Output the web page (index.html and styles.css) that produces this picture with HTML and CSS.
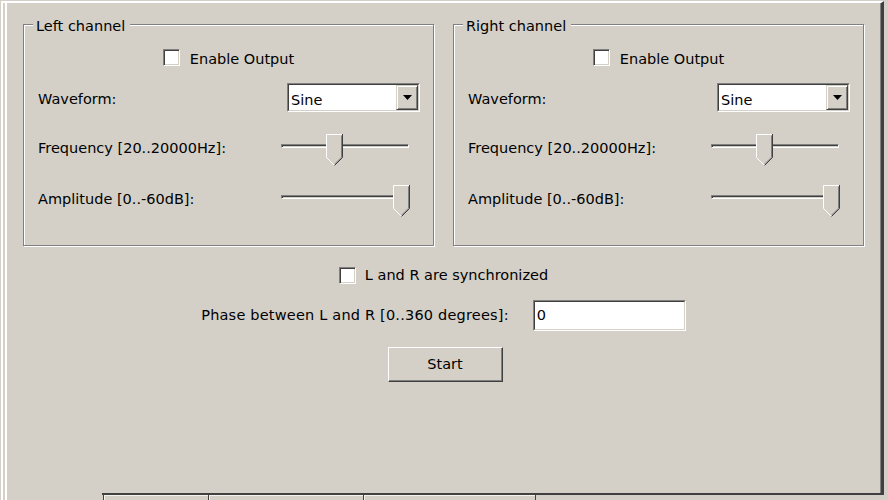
FILE: index.html
```html
<!DOCTYPE html>
<html>
<head>
<meta charset="utf-8">
<title>Signal generator</title>
<link rel="stylesheet" href="styles.css">
</head>
<body>
<div class="dialog">
  <div class="panel">
    <div class="content">
      <div class="groups">
        <div class="group">
          <div class="group-title">Left channel</div>
          <div class="row row-check">
            <span class="checkbox"></span><span class="label label-check">Enable Output</span>
          </div>
          <div class="row row-combo">
            <span class="label label-combo">Waveform:</span>
            <div class="combo"><div class="combo-inner"><span class="combo-text">Sine</span><span class="combo-btn"><svg width="9" height="5" viewBox="0 0 9 5"><polygon points="0,0 9,0 4.5,5" fill="#000"/></svg></span></div></div>
          </div>
          <div class="row row-slider">
            <span class="label label-slider">Frequency [20..20000Hz]:</span>
            <div class="slider"><div class="track"></div><svg class="thumb" style="left:45px" width="17" height="32" viewBox="0 0 17 32"><polygon points="0,0 17,0 17,23.5 8.5,32 0,23.5" fill="#d4d0c8"/><polyline points="0.5,23.5 0.5,0.5 16,0.5" fill="none" stroke="#fff"/><line x1="0.5" y1="23.5" x2="8.5" y2="31.5" stroke="#fff"/><polyline points="15.5,1.5 15.5,23.2 8.5,30.2" fill="none" stroke="#808080"/><polyline points="16.5,0 16.5,23.5 8.5,31.5" fill="none" stroke="#404040"/></svg></div>
          </div>
          <div class="row row-slider row-amp">
            <span class="label label-slider">Amplitude [0..-60dB]:</span>
            <div class="slider"><div class="track"></div><svg class="thumb" style="left:112px" width="17" height="32" viewBox="0 0 17 32"><polygon points="0,0 17,0 17,23.5 8.5,32 0,23.5" fill="#d4d0c8"/><polyline points="0.5,23.5 0.5,0.5 16,0.5" fill="none" stroke="#fff"/><line x1="0.5" y1="23.5" x2="8.5" y2="31.5" stroke="#fff"/><polyline points="15.5,1.5 15.5,23.2 8.5,30.2" fill="none" stroke="#808080"/><polyline points="16.5,0 16.5,23.5 8.5,31.5" fill="none" stroke="#404040"/></svg></div>
          </div>
        </div>
        <div class="group">
          <div class="group-title">Right channel</div>
          <div class="row row-check">
            <span class="checkbox"></span><span class="label label-check">Enable Output</span>
          </div>
          <div class="row row-combo">
            <span class="label label-combo">Waveform:</span>
            <div class="combo"><div class="combo-inner"><span class="combo-text">Sine</span><span class="combo-btn"><svg width="9" height="5" viewBox="0 0 9 5"><polygon points="0,0 9,0 4.5,5" fill="#000"/></svg></span></div></div>
          </div>
          <div class="row row-slider">
            <span class="label label-slider">Frequency [20..20000Hz]:</span>
            <div class="slider"><div class="track"></div><svg class="thumb" style="left:45px" width="17" height="32" viewBox="0 0 17 32"><polygon points="0,0 17,0 17,23.5 8.5,32 0,23.5" fill="#d4d0c8"/><polyline points="0.5,23.5 0.5,0.5 16,0.5" fill="none" stroke="#fff"/><line x1="0.5" y1="23.5" x2="8.5" y2="31.5" stroke="#fff"/><polyline points="15.5,1.5 15.5,23.2 8.5,30.2" fill="none" stroke="#808080"/><polyline points="16.5,0 16.5,23.5 8.5,31.5" fill="none" stroke="#404040"/></svg></div>
          </div>
          <div class="row row-slider row-amp">
            <span class="label label-slider">Amplitude [0..-60dB]:</span>
            <div class="slider"><div class="track"></div><svg class="thumb" style="left:112px" width="17" height="32" viewBox="0 0 17 32"><polygon points="0,0 17,0 17,23.5 8.5,32 0,23.5" fill="#d4d0c8"/><polyline points="0.5,23.5 0.5,0.5 16,0.5" fill="none" stroke="#fff"/><line x1="0.5" y1="23.5" x2="8.5" y2="31.5" stroke="#fff"/><polyline points="15.5,1.5 15.5,23.2 8.5,30.2" fill="none" stroke="#808080"/><polyline points="16.5,0 16.5,23.5 8.5,31.5" fill="none" stroke="#404040"/></svg></div>
          </div>
        </div>
      </div>
      <div class="sync">
        <span class="checkbox"></span><span class="label">L and R are synchronized</span>
      </div>
      <div class="phase">
        <span class="label label-phase">Phase between L and R [0..360 degrees]:</span>
        <div class="textbox"><div class="textbox-inner">0</div></div>
      </div>
      <div class="actions">
        <button class="btn" type="button">Start</button>
      </div>
    </div>
  </div>
  <div class="tabstrip">
    <div class="tab-active"><div class="tab-active-inner"></div></div>
    <div class="tabs-rest">
      <div class="tab tab-1"></div>
      <div class="tab tab-2"></div>
      <div class="tab tab-3"></div>
      <div class="tab tab-4"></div>
    </div>
  </div>
</div>
</body>
</html>
```

FILE: styles.css
```css
* { box-sizing: border-box; }
html, body { margin: 0; padding: 0; }
body {
  width: 888px;
  height: 500px;
  overflow: hidden;
  background: #d4d0c8;
  font-family: "DejaVu Sans", Verdana, sans-serif;
  font-size: 14.5px;
  line-height: 17px;
  color: #000;
}
.dialog {
  display: flex;
  flex-direction: column;
  height: 500px;
  padding: 1px 4px 0 1px;
}
.panel {
  flex: none;
  height: 492px;
  display: flex;
  border-top: 2px solid #fff;
  border-left: 2px solid #fff;
  border-right: 3px solid #404040;
  box-shadow: inset -1px 0 0 #808080;
}
.content {
  flex: 1;
  margin-left: 2px;
  margin-right: 1px;
  border-left: 2px solid #fff;
  padding-top: 21px;
  display: flex;
  flex-direction: column;
}
.groups {
  display: flex;
  gap: 19px;
  margin-left: 16px;
}
.group {
  width: 411px;
  height: 222px;
  border: 1px solid #808080;
  box-shadow: 1px 1px 0 #fff, inset 1px 1px 0 #fff;
  display: flex;
  flex-direction: column;
}
.group-title {
  align-self: flex-start;
  margin: -7px 0 0 9px;
  padding: 0 5px 0 3px;
  background: #d4d0c8;
}
.row {
  display: flex;
  padding: 0 13px 0 14px;
}
.label { white-space: nowrap; }
.row-check {
  justify-content: center;
  align-items: flex-start;
  gap: 10px;
  margin-top: 14px;
  padding: 0;
}
.label-check { margin-top: 2px; }
.row-combo {
  justify-content: space-between;
  align-items: flex-start;
  margin-top: 15px;
}
.label-combo { margin-top: 8px; }
.row-slider {
  justify-content: space-between;
  align-items: flex-start;
  margin-top: 22px;
}
.row-amp { margin-top: 19px; }
.label-slider { margin-top: 6px; }

.checkbox {
  flex: none;
  width: 17px;
  height: 17px;
  background: #fff;
  border: 1px solid;
  border-color: #808080 #fff #fff #808080;
  box-shadow: inset 1px 1px 0 #404040, inset -1px -1px 0 #d4d0c8;
}

.combo {
  width: 133px;
  height: 29px;
  border: 1px solid;
  border-color: #808080 #fff #fff #808080;
}
.combo-inner {
  height: 100%;
  display: flex;
  background: #fff;
  border: 1px solid;
  border-color: #404040 #d4d0c8 #d4d0c8 #404040;
}
.combo-text {
  flex: 1;
  padding: 7px 0 0 2px;
}
.combo-btn {
  flex: none;
  width: 22px;
  display: flex;
  align-items: center;
  justify-content: center;
  background: #d4d0c8;
  border: 1px solid;
  border-color: #d4d0c8 #404040 #404040 #d4d0c8;
  box-shadow: inset 1px 1px 0 #fff, inset -1px -1px 0 #808080;
}
.combo-btn svg { display: block; margin-top: -1px; }

.slider {
  position: relative;
  width: 130px;
  height: 32px;
  margin-right: 9px;
}
.track {
  margin-top: 10px;
  width: 128px;
  height: 4px;
  border: 1px solid;
  border-color: #808080 #fff #fff #808080;
  box-shadow: inset 1px 1px 0 #404040;
}
.thumb {
  position: absolute;
  top: 0;
  display: block;
}

.sync {
  display: flex;
  justify-content: center;
  align-items: flex-start;
  gap: 9px;
  margin-top: 21px;
}
.phase {
  display: flex;
  justify-content: center;
  align-items: center;
  gap: 24px;
  margin-top: 16px;
}
.label-phase { letter-spacing: 0.2px; }
.textbox {
  width: 153px;
  height: 31px;
  border: 1px solid;
  border-color: #808080 #fff #fff #808080;
}
.textbox-inner {
  height: 100%;
  display: flex;
  align-items: center;
  padding-left: 2px;
  background: #fff;
  border: 1px solid;
  border-color: #404040 #d4d0c8 #d4d0c8 #404040;
}
.actions {
  display: flex;
  justify-content: center;
  margin-top: 16px;
}
.btn {
  width: 115px;
  height: 35px;
  margin-left: 3px;
  padding: 0;
  font: inherit;
  color: #000;
  background: #d4d0c8;
  border: 1px solid;
  border-color: #fff #404040 #404040 #fff;
  box-shadow: inset -1px -1px 0 #808080;
}

.tabstrip {
  flex: 1;
  display: flex;
}
.tab-active {
  width: 101px;
  border-left: 2px solid #fff;
  padding-left: 2px;
}
.tab-active-inner {
  height: 100%;
  border-left: 2px solid #fff;
}
.tabs-rest {
  flex: 1;
  display: flex;
  padding-left: 1px;
  border-top: 2px solid #404040;
}
.tab {
  border-left: 1px solid #404040;
  box-shadow: inset 1px 1px 0 #f4f3ef;
}
.tab-1 { width: 105px; }
.tab-2 { width: 155px; }
.tab-3 { width: 172px; }
.tab-4 { flex: 1; box-shadow: none; }
```
